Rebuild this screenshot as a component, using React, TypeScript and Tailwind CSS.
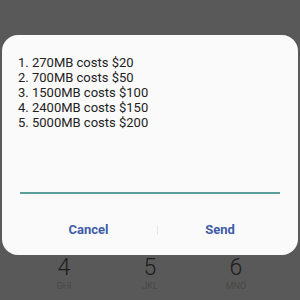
export default function App() {
  const plans = [
    "1. 270MB costs $20",
    "2. 700MB costs $50",
    "3. 1500MB costs $100",
    "4. 2400MB costs $150",
    "5. 5000MB costs $200",
  ];

  const keys = [
    { digit: "4", letters: "GHI" },
    { digit: "5", letters: "JKL" },
    { digit: "6", letters: "MNO" },
  ];

  return (
    <div
      className="w-[300px] h-[300px] overflow-hidden bg-[#595959] flex flex-col"
      style={{ fontFamily: "Roboto, 'Liberation Sans', sans-serif" }}
    >
      <div className="mt-[35px] mx-[2px] h-[220px] shrink-0 rounded-[16px] bg-[#fafafa] flex flex-col">
        <div className="pt-[20px] pl-[16px] text-[13px] leading-[15px] text-[#222222]">
          {plans.map((p) => (
            <div key={p}>{p}</div>
          ))}
        </div>
        <div className="mt-auto mx-[18px] h-[2px] bg-[#5a9f99]" />
        <div className="flex items-center h-[61px] pt-[10px] pl-[18px]">
          <button className="w-[137px] text-center text-[13px] font-bold text-[#3f5ca8]">
            Cancel
          </button>
          <div className="w-px h-[10px] bg-[#e6e6e6]" />
          <button className="w-[124px] text-center text-[13px] font-bold text-[#3f5ca8]">
            Send
          </button>
        </div>
      </div>
      <div className="grid grid-cols-3 px-[21px]">
        {keys.map((k) => (
          <div key={k.digit} className="flex flex-col items-center">
            <div className="text-[23px] leading-[25px] font-light text-[#1c1c1c]">{k.digit}</div>
            <div className="mt-[1px] text-[9px] leading-[10px] text-[#484848]">{k.letters}</div>
          </div>
        ))}
      </div>
    </div>
  );
}
